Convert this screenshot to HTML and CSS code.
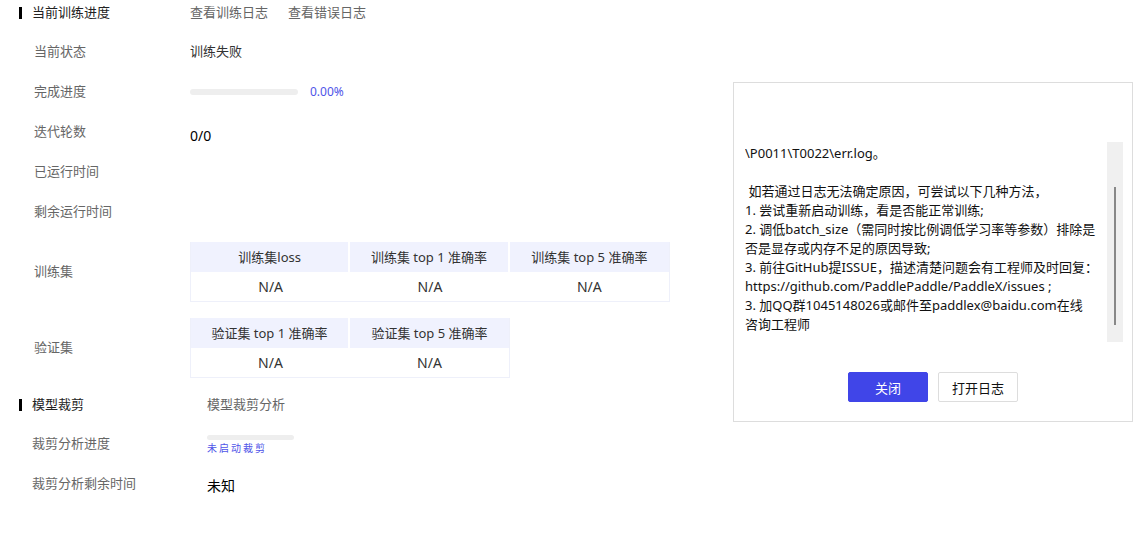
FILE: index.html
```html
<!DOCTYPE html>
<html lang="zh-CN">
<head>
<meta charset="utf-8">
<title>训练进度</title>
<link rel="stylesheet" href="styles.css">
</head>
<body>
<div class="page">
  <div class="main">
    <div class="sec-head">
      <span class="bar"></span>
      <span class="sec-title">当前训练进度</span>
      <div class="links">
        <span class="link">查看训练日志</span>
        <span class="link">查看错误日志</span>
      </div>
    </div>
    <div class="row"><span class="label">当前状态</span><span class="val">训练失败</span></div>
    <div class="row"><span class="label">完成进度</span><span class="val prog"><span class="track"></span><span class="pct">0.00%</span></span></div>
    <div class="row"><span class="label">迭代轮数</span><span class="val num iter">0/0</span></div>
    <div class="row"><span class="label">已运行时间</span><span class="val"></span></div>
    <div class="row"><span class="label">剩余运行时间</span><span class="val"></span></div>
    <div class="row trow first">
      <span class="label">训练集</span>
      <div class="tbl cols3">
        <div class="th">训练集loss</div><div class="th">训练集 top 1 准确率</div><div class="th last">训练集 top 5 准确率</div>
        <div class="td">N/A</div><div class="td">N/A</div><div class="td">N/A</div>
      </div>
    </div>
    <div class="row trow second">
      <span class="label">验证集</span>
      <div class="tbl cols2">
        <div class="th">验证集 top 1 准确率</div><div class="th last">验证集 top 5 准确率</div>
        <div class="td">N/A</div><div class="td">N/A</div>
      </div>
    </div>

    <div class="sec-head sec2">
      <span class="bar"></span>
      <span class="sec-title">模型裁剪</span>
      <div class="links links2"><span class="link">模型裁剪分析</span></div>
    </div>
    <div class="row row2"><span class="label">裁剪分析进度</span><span class="val val2 prune"><span class="track small"></span><span class="hint">未启动裁剪</span></span></div>
    <div class="row row2"><span class="label">裁剪分析剩余时间</span><span class="val val2 num">未知</span></div>
  </div>

  <div class="dialog">
    <div class="dlg-body">
      <div class="dlg-text">
        <div>\P0011\T0022\err.log。</div>
        <div>&nbsp;</div>
        <div>&nbsp;如若通过日志无法确定原因，可尝试以下几种方法，</div>
        <div>1. 尝试重新启动训练，看是否能正常训练;</div>
        <div>2. 调低batch_size（需同时按比例调低学习率等参数）排除是</div>
        <div>否是显存或内存不足的原因导致;</div>
        <div>3. 前往GitHub提ISSUE，描述清楚问题会有工程师及时回复：</div>
        <div>https://github.com/PaddlePaddle/PaddleX/issues ;</div>
        <div>3. 加QQ群1045148026或邮件至paddlex@baidu.com在线</div>
        <div>咨询工程师</div>
      </div>
      <div class="sb"><div class="sb-thumb"></div></div>
    </div>
    <div class="dlg-foot">
      <button class="btn primary">关闭</button>
      <button class="btn">打开日志</button>
    </div>
  </div>
</div>
</body>
</html>
```
FILE: styles.css
```css
* { box-sizing: border-box; }
html, body { margin: 0; padding: 0; background: #fff; }
body {
  font-family: "Noto Sans", "Noto Sans CJK SC", sans-serif;
  font-size: 13px;
  color: #333;
  width: 1141px;
  height: 537px;
  overflow: hidden;
}
.page { position: relative; width: 1141px; height: 537px; }
.main { width: 700px; }

.sec-head { display: flex; align-items: center; height: 22px; padding-left: 19px; }
.bar { width: 3px; height: 12px; background: #000; margin-right: 10px; margin-top: 4px; }
.sec-title { color: #222; width: 158px; }
.links { display: flex; gap: 20px; }
.link { color: #666; }
.sec2 { margin-top: 14px; }
.links2 { padding-left: 17px; }

.row { display: flex; align-items: center; height: 40px; padding-left: 34px; }
.sec-head + .row { margin-top: 8px; }
.label { color: #666; width: 156px; flex: none; }
.val { color: #333; }
.num { color: #000; font-size: 14px; padding-top: 6px; }
.num.iter { padding-top: 10px; }
.prog { display: flex; align-items: center; padding-top: 3px; }
.track { display: block; width: 108px; height: 6px; background: #eee; border-radius: 3px; }
.pct { color: #4f54e8; font-size: 12px; margin-left: 12px; }

.trow { height: auto; }
.trow .label { padding-bottom: 3px; }
.trow.first { margin-top: 12px; }
.trow.second { margin-top: 16px; }
.tbl { display: grid; border: 1px solid #eef0fa; border-top: none; }
.cols3 { grid-template-columns: 1fr 1fr 1fr; width: 480px; }
.cols2 { grid-template-columns: 1fr 1fr; width: 320px; }
.th {
  height: 30px; background: #f0f2fe; display: flex; align-items: center; justify-content: center;
  border-right: 2px solid #fff; color: #333; padding-bottom: 1px;
}
.th.last { border-right: none; }
.td { height: 29px; display: flex; align-items: center; justify-content: center; font-size: 14px; color: #333; }

.row2 { padding-left: 32px; }
.row2 .label { width: 175px; }
.sec2 + .row2 { margin-top: 8px; }
.prune { display: flex; flex-direction: column; padding-top: 4px; }
.track.small { width: 87px; height: 5px; }
.hint { color: #4f54e8; font-size: 10px; letter-spacing: 2px; margin-top: 2px; line-height: 12px; }

.dialog {
  position: absolute; left: 733px; top: 82px; width: 400px; height: 340px;
  border: 1px solid #ddd; background: #fff;
  display: flex; flex-direction: column;
}
.dlg-body { display: flex; margin-top: 59px; padding-left: 11px; height: 200px; }
.dlg-text { width: 362px; color: #111; line-height: 19px; white-space: nowrap; padding-top: 2px; overflow: hidden; }
.sb { width: 16px; height: 200px; background: #f0f0f0; padding-top: 45px; }
.sb-thumb { width: 2px; height: 138px; background: #888; margin-left: 7px; }
.dlg-foot { display: flex; justify-content: center; gap: 10px; margin-top: 30px; }
.btn {
  width: 80px; height: 30px; border: 1px solid #ddd; border-radius: 2px; background: #fff;
  font-family: inherit; font-size: 13px; color: #111; padding: 0; cursor: pointer;
}
.btn.primary { background: #4045e8; border-color: #4045e8; color: #fff; }
```
